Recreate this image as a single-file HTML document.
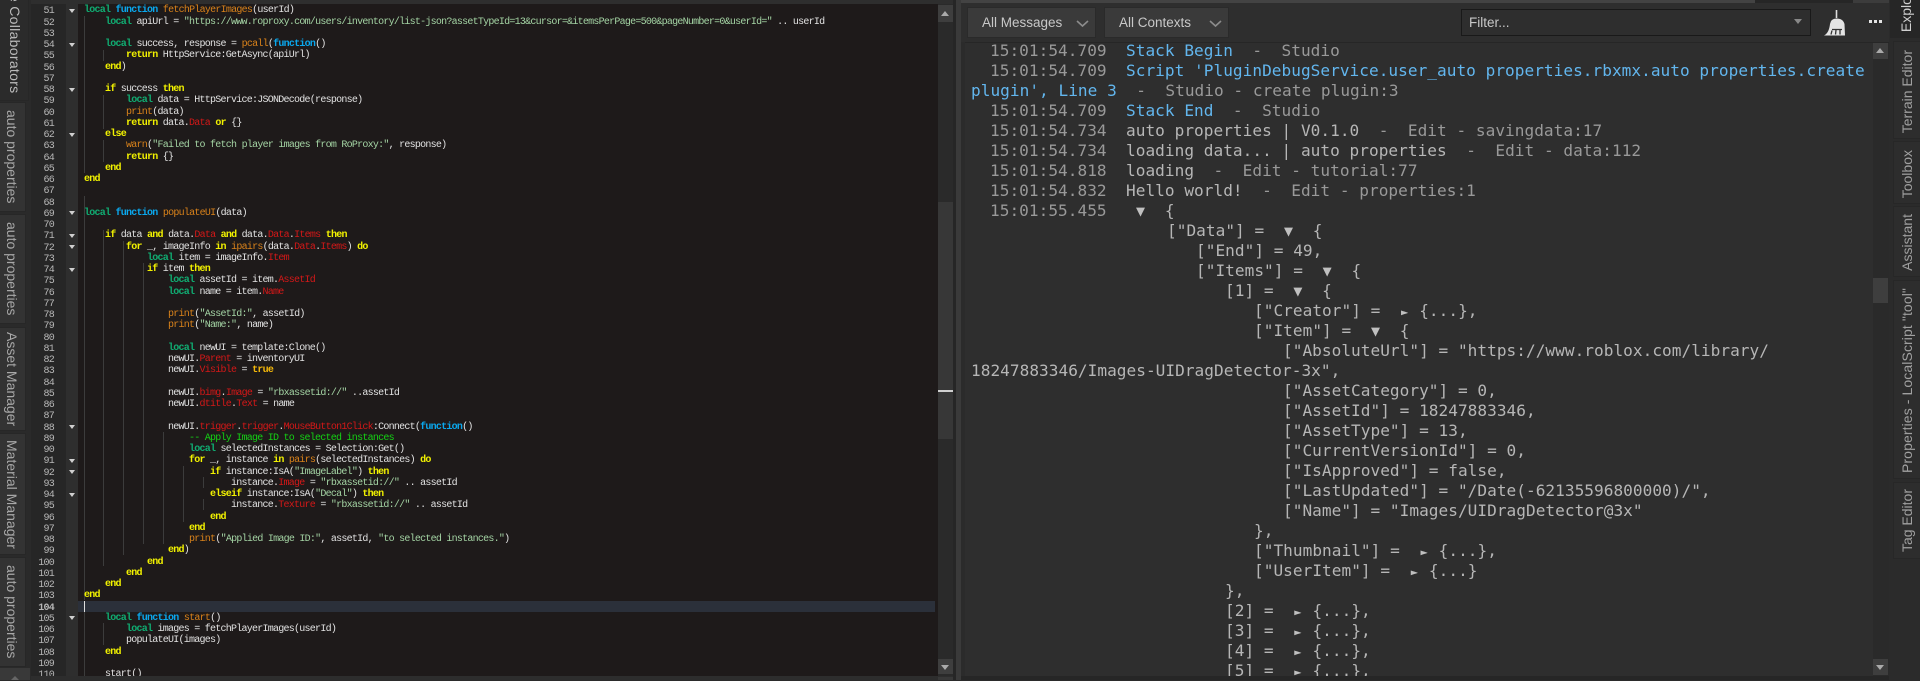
<!DOCTYPE html>
<html><head><meta charset="utf-8"><style>
*{margin:0;padding:0;box-sizing:border-box}
html,body{width:1920px;height:680px;overflow:hidden;background:#2b2b2b}
.a{position:absolute}
#code,#nums{font-family:"Liberation Mono",monospace;font-size:10px;letter-spacing:-.75px;line-height:11.25px;white-space:pre}
#code{left:84px;top:5.4px;color:#e2e2e2;z-index:3}
#nums{left:20px;width:34px;top:6.4px;text-align:right;color:#b8b8b8;z-index:3}
.l{color:#10ad72;font-weight:bold}.f{color:#0aa8ee;font-weight:bold}.k{color:#f2f200;font-weight:bold}
.n{color:#d9821a}.s{color:#a4d4a4}.c{color:#14d214}.p{color:#d41818}.t{color:#f5b90a;font-weight:bold}
.g{position:absolute;width:1px;background:#3c3c3c;z-index:2}
.tab{position:absolute;background:#333;border:1px solid #272727;color:#a8a8a8;font:14px "Liberation Sans",sans-serif;writing-mode:vertical-rl;text-align:center;white-space:nowrap;line-height:26px}
.tr{position:absolute;background:#2d2d2d;border:1px solid #272727;color:#a0a0a0;font:14px "Liberation Sans",sans-serif;white-space:nowrap}
.tr span{position:absolute;left:5px;bottom:0;writing-mode:vertical-rl;transform:rotate(180deg);line-height:17px}
.fold{position:absolute;left:69px;width:0;height:0;border-left:3.5px solid transparent;border-right:3.5px solid transparent;border-top:4px solid #d0d0d0;z-index:3}
.m{position:absolute;font-family:"DejaVu Sans Mono",monospace;font-size:16.1px;letter-spacing:.03px;line-height:20px;color:#999;white-space:pre;z-index:2}
.b{color:#62b6ee}.w{color:#b6b6b6}
.m i{font-style:normal;font-size:15px;color:#c0c0c0;display:inline-block;width:9.7px;text-align:center}
.m i.r{font-size:12px}
.btn{position:absolute;top:7px;height:31px;background:#3a3a3a;border:1px solid #2a2a2a;color:#c8c8c8;font:13.5px/29px "Liberation Sans",sans-serif;padding-left:14px}
.sb{position:absolute;background:#3e3e3e}
.ar{position:absolute;width:0;height:0;border-left:4.5px solid transparent;border-right:4.5px solid transparent}
</style></head><body>

<!-- left column -->
<div class="a" style="left:0;top:0;width:31px;height:680px;background:#2a2a2a"></div>
<div class="tab" style="left:-1px;top:-30px;width:30px;height:131px;background:#2b2b2b;text-align:right;padding-bottom:7px;color:#bcbcbc;letter-spacing:.3px">e Collaborators</div>
<div class="tab" style="left:-1px;top:102px;width:27px;height:110px">auto properties</div>
<div class="tab" style="left:-1px;top:214px;width:27px;height:110px">auto properties</div>
<div class="tab" style="left:-1px;top:327px;width:27px;height:104px">Asset Manager</div>
<div class="tab" style="left:-1px;top:433px;width:27px;height:122px">Material Manager</div>
<div class="tab" style="left:-1px;top:557px;width:27px;height:110px">auto properties</div>
<div class="a" style="left:0;top:668px;width:30px;height:12px;background:#393939"></div>
<div class="ar" style="left:11px;top:676px;border-bottom:4px solid #666"></div>

<!-- editor -->
<div class="a" style="left:31px;top:4px;width:35px;height:672px;background:#262626"></div>
<div class="a" style="left:66px;top:4px;width:12px;height:672px;background:#2e2e2e"></div>
<div class="a" style="left:78px;top:4px;width:860px;height:672px;background:#1e1a1a"></div>
<div class="a" style="left:31px;top:0;width:922px;height:4px;background:#2e2e2e"></div>
<div class="a" style="left:78px;top:601px;width:857px;height:11px;background:#2b303a;z-index:1"></div>
<div class="a" style="left:84px;top:601px;width:1px;height:11px;background:#ddd;z-index:3"></div>
<div class="a" style="left:31px;top:676px;width:922px;height:4px;background:#2d2d2d"></div>
<div class="a" style="left:170px;top:677px;width:783px;height:3px;background:#383838"></div>

<div class="g" style="left:84px;top:16px;height:157px"></div>
<div class="g" style="left:84px;top:196px;height:404px"></div>
<div class="g" style="left:84px;top:612px;height:64px"></div>
<div class="g" style="left:103px;top:50px;height:11px"></div>
<div class="g" style="left:103px;top:95px;height:34px"></div>
<div class="g" style="left:103px;top:140px;height:22px"></div>
<div class="g" style="left:103px;top:230px;height:336px"></div>
<div class="g" style="left:103px;top:623px;height:22px"></div>
<div class="g" style="left:123px;top:241px;height:314px"></div>
<div class="g" style="left:143px;top:263px;height:281px"></div>
<div class="g" style="left:163px;top:432px;height:112px"></div>
<div class="g" style="left:183px;top:466px;height:56px"></div>
<div class="g" style="left:203px;top:477px;height:11px"></div>
<div class="g" style="left:203px;top:499px;height:11px"></div>

<div class="fold" style="top:9px"></div><div class="fold" style="top:43px"></div><div class="fold" style="top:88px"></div>
<div class="fold" style="top:133px"></div><div class="fold" style="top:211px"></div><div class="fold" style="top:234px"></div>
<div class="fold" style="top:245px"></div><div class="fold" style="top:268px"></div><div class="fold" style="top:425px"></div>
<div class="fold" style="top:459px"></div><div class="fold" style="top:470px"></div><div class="fold" style="top:493px"></div>
<div class="fold" style="top:616px"></div>

<div id="nums" class="a">51
52
53
54
55
56
57
58
59
60
61
62
63
64
65
66
67
68
69
70
71
72
73
74
75
76
77
78
79
80
81
82
83
84
85
86
87
88
89
90
91
92
93
94
95
96
97
98
99
100
101
102
103
<b>104</b>
105
106
107
108
109
110</div>

<div id="code" class="a"><span class="l">local</span> <span class="f">function</span> <span class="n">fetchPlayerImages</span>(userId)
    <span class="l">local</span> apiUrl = <span class="s">"https://www.roproxy.com/users/inventory/list-json?assetTypeId=13&amp;cursor=&amp;itemsPerPage=500&amp;pageNumber=0&amp;userId="</span> .. userId

    <span class="l">local</span> success, response = <span class="n">pcall</span>(<span class="f">function</span>()
        <span class="k">return</span> HttpService:GetAsync(apiUrl)
    <span class="k">end</span>)

    <span class="k">if</span> success <span class="k">then</span>
        <span class="l">local</span> data = HttpService:JSONDecode(response)
        <span class="n">print</span>(data)
        <span class="k">return</span> data.<span class="p">Data</span> <span class="k">or</span> {}
    <span class="k">else</span>
        <span class="n">warn</span>(<span class="s">"Failed to fetch player images from RoProxy:"</span>, response)
        <span class="k">return</span> {}
    <span class="k">end</span>
<span class="k">end</span>


<span class="l">local</span> <span class="f">function</span> <span class="n">populateUI</span>(data)

    <span class="k">if</span> data <span class="k">and</span> data.<span class="p">Data</span> <span class="k">and</span> data.<span class="p">Data</span>.<span class="p">Items</span> <span class="k">then</span>
        <span class="k">for</span> _, imageInfo <span class="k">in</span> <span class="n">ipairs</span>(data.<span class="p">Data</span>.<span class="p">Items</span>) <span class="k">do</span>
            <span class="l">local</span> item = imageInfo.<span class="p">Item</span>
            <span class="k">if</span> item <span class="k">then</span>
                <span class="l">local</span> assetId = item.<span class="p">AssetId</span>
                <span class="l">local</span> name = item.<span class="p">Name</span>

                <span class="n">print</span>(<span class="s">"AssetId:"</span>, assetId)
                <span class="n">print</span>(<span class="s">"Name:"</span>, name)

                <span class="l">local</span> newUI = template:Clone()
                newUI.<span class="p">Parent</span> = inventoryUI
                newUI.<span class="p">Visible</span> = <span class="t">true</span>

                newUI.<span class="p">bimg</span>.<span class="p">Image</span> = <span class="s">"rbxassetid://"</span> ..assetId
                newUI.<span class="p">dtitle</span>.<span class="p">Text</span> = name

                newUI.<span class="p">trigger</span>.<span class="p">trigger</span>.<span class="p">MouseButton1Click</span>:Connect(<span class="f">function</span>()
                    <span class="c">-- Apply Image ID to selected instances</span>
                    <span class="l">local</span> selectedInstances = Selection:Get()
                    <span class="k">for</span> _, instance <span class="k">in</span> <span class="n">pairs</span>(selectedInstances) <span class="k">do</span>
                        <span class="k">if</span> instance:IsA(<span class="s">"ImageLabel"</span>) <span class="k">then</span>
                            instance.<span class="p">Image</span> = <span class="s">"rbxassetid://"</span> .. assetId
                        <span class="k">elseif</span> instance:IsA(<span class="s">"Decal"</span>) <span class="k">then</span>
                            instance.<span class="p">Texture</span> = <span class="s">"rbxassetid://"</span> .. assetId
                        <span class="k">end</span>
                    <span class="k">end</span>
                    <span class="n">print</span>(<span class="s">"Applied Image ID:"</span>, assetId, <span class="s">"to selected instances."</span>)
                <span class="k">end</span>)
            <span class="k">end</span>
        <span class="k">end</span>
    <span class="k">end</span>
<span class="k">end</span>

    <span class="l">local</span> <span class="f">function</span> <span class="n">start</span>()
        <span class="l">local</span> images = fetchPlayerImages(userId)
        populateUI(images)
    <span class="k">end</span>

    start()</div>
<div class="a" style="left:31px;top:676px;width:907px;height:4px;background:#2d2d2d;z-index:4"></div>

<!-- editor scrollbar -->
<div class="a" style="left:938px;top:4px;width:15px;height:672px;background:#2a2a2a"></div>
<div class="sb" style="left:938px;top:5px;width:15px;height:17px"></div>
<div class="ar" style="left:941px;top:11px;border-bottom:5px solid #aaa"></div>
<div class="sb" style="left:938px;top:202px;width:15px;height:237px;background:#373737"></div>
<div class="a" style="left:938px;top:390px;width:16px;height:2px;background:#d0d0d0"></div>
<div class="sb" style="left:938px;top:659px;width:15px;height:15px"></div>
<div class="ar" style="left:941px;top:665px;border-top:5px solid #aaa"></div>
<div class="a" style="left:953px;top:0;width:3px;height:680px;background:#262626"></div>
<div class="a" style="left:956px;top:0;width:5px;height:680px;background:#3a3a3a"></div>
<div class="a" style="left:961px;top:0;width:4px;height:680px;background:#2b2b2b"></div>

<!-- console header -->
<div class="a" style="left:961px;top:0;width:930px;height:42px;background:#2e2e2e"></div>
<div class="a" style="left:961px;top:0;width:795px;height:3px;background:#434343"></div>
<div class="a" style="left:1755px;top:0;width:98px;height:3px;background:#262626"></div>
<div class="a" style="left:1853px;top:0;width:37px;height:3px;background:#3c3c3c"></div>
<div class="btn" style="left:967px;width:129px">All Messages</div>
<svg class="a" style="left:1076px;top:20px" width="14" height="8"><polyline points="1,1 6.5,6 12,1" fill="none" stroke="#8c8c8c" stroke-width="1.6"/></svg>
<div class="btn" style="left:1104px;width:125px">All Contexts</div>
<svg class="a" style="left:1209px;top:20px" width="14" height="8"><polyline points="1,1 6.5,6 12,1" fill="none" stroke="#8c8c8c" stroke-width="1.6"/></svg>
<div class="a" style="left:1461px;top:9px;width:350px;height:27px;background:#2e2e2e;border:1px solid #191919;color:#c8c8c8;font:13.5px/25px 'Liberation Sans',sans-serif;padding-left:7px">Filter...</div>
<div class="ar" style="left:1794px;top:19px;border-top:5px solid #888"></div>
<svg class="a" style="left:1820px;top:6px" width="30" height="32"><path d="M16.5 4V12" stroke="#ddd" stroke-width="1.6"/><path d="M10 18Q11 12.500 16.500 12.500Q23 12.500 24.500 18L25 29.500H4Q9 27 10 18Z" fill="#e4e4e4"/><path d="M12 24.500L11 28.500M16 24L15.500 28.500M20 24V28.500M12 23.500H22" stroke="#333" stroke-width="1.3" fill="none"/></svg>
<div class="a" style="left:1869px;top:20px;width:2.500px;height:2.500px;background:#e4e4e4"></div>
<div class="a" style="left:1874px;top:20px;width:2.500px;height:2.500px;background:#e4e4e4"></div>
<div class="a" style="left:1879px;top:20px;width:2.500px;height:2.500px;background:#e4e4e4"></div>

<!-- console body -->
<div class="a" style="left:965px;top:42px;width:925px;height:634px;background:#2e2e2e;border-top:1px solid #262626;overflow:hidden"></div>
<div class="a" style="left:965px;top:43px;width:908px;height:633px;overflow:hidden;z-index:2">
<div class="m" style="left:25px;top:-2px">15:01:54.709</div><div class="m b" style="left:161px;top:-2px">Stack Begin<span style="color:#999">  -  Studio</span></div>
<div class="m" style="left:25px;top:18px">15:01:54.709</div><div class="m b" style="left:161px;top:18px">Script 'PluginDebugService.user_auto properties.rbxmx.auto properties.create</div>
<div class="m b" style="left:6px;top:38px">plugin', Line 3<span style="color:#999">  -  Studio - create plugin:3</span></div>
<div class="m" style="left:25px;top:58px">15:01:54.709</div><div class="m b" style="left:161px;top:58px">Stack End<span style="color:#999">  -  Studio</span></div>
<div class="m" style="left:25px;top:78px">15:01:54.734</div><div class="m w" style="left:161px;top:78px">auto properties | V0.1.0<span style="color:#999">  -  Edit - savingdata:17</span></div>
<div class="m" style="left:25px;top:98px">15:01:54.734</div><div class="m w" style="left:161px;top:98px">loading data... | auto properties<span style="color:#999">  -  Edit - data:112</span></div>
<div class="m" style="left:25px;top:118px">15:01:54.818</div><div class="m w" style="left:161px;top:118px">loading<span style="color:#999">  -  Edit - tutorial:77</span></div>
<div class="m" style="left:25px;top:138px">15:01:54.832</div><div class="m w" style="left:161px;top:138px">Hello world!<span style="color:#999">  -  Edit - properties:1</span></div>
<div class="m" style="left:25px;top:158px">15:01:55.455</div><div class="m w" style="left:161px;top:158px"> <i>▼</i>  {</div>
<div class="m w" style="left:202px;top:178px">["Data"] =  <i>▼</i>  {</div>
<div class="m w" style="left:231px;top:198px">["End"] = 49,</div>
<div class="m w" style="left:231px;top:218px">["Items"] =  <i>▼</i>  {</div>
<div class="m w" style="left:260px;top:238px">[1] =  <i>▼</i>  {</div>
<div class="m w" style="left:289px;top:258px">["Creator"] =  <i class="r">►</i> {...},</div>
<div class="m w" style="left:289px;top:278px">["Item"] =  <i>▼</i>  {</div>
<div class="m w" style="left:318px;top:298px">["AbsoluteUrl"] = "https://www.roblox.com/library/</div>
<div class="m w" style="left:6px;top:318px">18247883346/Images-UIDragDetector-3x",</div>
<div class="m w" style="left:318px;top:338px">["AssetCategory"] = 0,</div>
<div class="m w" style="left:318px;top:358px">["AssetId"] = 18247883346,</div>
<div class="m w" style="left:318px;top:378px">["AssetType"] = 13,</div>
<div class="m w" style="left:318px;top:398px">["CurrentVersionId"] = 0,</div>
<div class="m w" style="left:318px;top:418px">["IsApproved"] = false,</div>
<div class="m w" style="left:318px;top:438px">["LastUpdated"] = "/Date(-62135596800000)/",</div>
<div class="m w" style="left:318px;top:458px">["Name"] = "Images/UIDragDetector@3x"</div>
<div class="m w" style="left:289px;top:478px">},</div>
<div class="m w" style="left:289px;top:498px">["Thumbnail"] =  <i class="r">►</i> {...},</div>
<div class="m w" style="left:289px;top:518px">["UserItem"] =  <i class="r">►</i> {...}</div>
<div class="m w" style="left:260px;top:538px">},</div>
<div class="m w" style="left:260px;top:558px">[2] =  <i class="r">►</i> {...},</div>
<div class="m w" style="left:260px;top:578px">[3] =  <i class="r">►</i> {...},</div>
<div class="m w" style="left:260px;top:598px">[4] =  <i class="r">►</i> {...},</div>
<div class="m w" style="left:260px;top:618px">[5] =  <i class="r">►</i> {...},</div>
</div>
<div class="a" style="left:961px;top:676px;width:932px;height:4px;background:#262626;z-index:3"></div>

<!-- console scrollbar -->
<div class="a" style="left:1873px;top:43px;width:16px;height:633px;background:#2a2a2a;z-index:3"></div>
<div class="sb" style="left:1873px;top:43px;width:15px;height:16px;z-index:4"></div>
<div class="ar" style="left:1876px;top:48px;border-bottom:5px solid #aaa;z-index:5"></div>
<div class="sb" style="left:1873px;top:278px;width:15px;height:25px;z-index:4"></div>
<div class="sb" style="left:1873px;top:659px;width:15px;height:16px;z-index:4"></div>
<div class="ar" style="left:1876px;top:665px;border-top:5px solid #aaa;z-index:5"></div>

<!-- right tabs -->
<div class="a" style="left:1889px;top:0;width:31px;height:680px;background:#2b2b2b;z-index:3"></div>
<div class="tr" style="left:1890px;top:-1px;width:31px;height:39px;background:#262626;border:0;color:#d0d0d0;z-index:4;overflow:hidden"><span style="left:8px;bottom:6px">Explorer</span></div>
<div class="tr" style="left:1893px;top:41px;width:28px;height:98px;z-index:4"><span style="bottom:5px">Terrain Editor</span></div>
<div class="tr" style="left:1893px;top:141px;width:28px;height:63px;z-index:4"><span style="bottom:5px">Toolbox</span></div>
<div class="tr" style="left:1893px;top:206px;width:28px;height:71px;z-index:4"><span style="bottom:5px">Assistant</span></div>
<div class="tr" style="left:1893px;top:280px;width:28px;height:199px;z-index:4"><span style="bottom:5px;letter-spacing:.1px">Properties - LocalScript "tool"</span></div>
<div class="tr" style="left:1893px;top:482px;width:28px;height:77px;z-index:4"><span style="bottom:6px">Tag Editor</span></div>
</body></html>
